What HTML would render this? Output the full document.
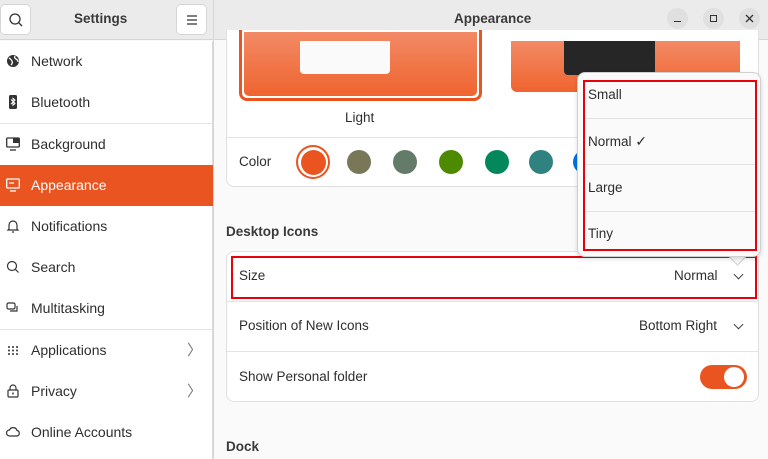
<!DOCTYPE html><html><head><style>
*{margin:0;padding:0;box-sizing:border-box}
body{width:768px;height:459px;overflow:hidden;font-family:"Liberation Sans",sans-serif;font-size:13.5px;color:#2e2e2e;background:#fafafa;position:relative}
.a{position:absolute}
.hdr{left:0;top:0;width:768px;height:40px;background:#ebebeb;border-bottom:1px solid #d6d6d6}
.side{left:0;top:41px;width:213px;height:418px;background:#fff;border-right:1px solid #d9d9d9}
.it{position:absolute;left:0;width:213px;height:41px;line-height:41px;padding-left:31px;font-size:14px}
.ic{position:absolute;left:6px;top:13px;width:14px;height:14px}
.btn{background:#fff;border:1px solid #d6d6d6;border-radius:5px}
.dot{width:24px;height:24px;border-radius:50%}
.card{background:#fff;border:1px solid #e0e0e0;border-radius:8px}
.sep{height:1px;background:#e3e3e3}
.chev{width:7px;height:7px;border-right:1.3px solid #444;border-bottom:1.3px solid #444;transform:rotate(45deg)}
</style></head><body>
<div class="a hdr"></div>
<div class="a btn" style="left:0;top:4px;width:31px;height:31px"><svg width="31" height="31"><circle cx="14" cy="14" r="5" fill="none" stroke="#333" stroke-width="1.3"/><line x1="18" y1="18" x2="21" y2="21" stroke="#333" stroke-width="1.3"/></svg></div>
<div class="a" style="left:74px;top:11px;font-weight:bold;font-size:13.5px;color:#3a3a3a">Settings</div>
<div class="a btn" style="left:176px;top:4px;width:31px;height:31px"><svg width="31" height="31"><path d="M10 11h10M10 15h10M10 19h10" stroke="#333" stroke-width="1.2"/></svg></div>
<div class="a" style="left:213px;top:0;width:1px;height:459px;background:#d6d6d6"></div>
<div class="a" style="left:454px;top:11px;font-weight:bold;font-size:13.5px;color:#3a3a3a">Appearance</div>
<div class="a" style="left:667px;top:8px;width:21px;height:21px;border-radius:50%;background:#e0e0e0"><div class="a" style="left:7px;top:13px;width:7px;height:1.3px;background:#333"></div></div>
<div class="a" style="left:703px;top:8px;width:21px;height:21px;border-radius:50%;background:#e0e0e0"><div class="a" style="left:7px;top:7px;width:7px;height:7px;border:1.2px solid #333"></div></div>
<div class="a" style="left:739px;top:8px;width:21px;height:21px;border-radius:50%;background:#e0e0e0"><svg width="21" height="21"><path d="M7 7l7 7M14 7l-7 7" stroke="#333" stroke-width="1.3"/></svg></div>

<div class="a side">
<div class="it" style="top:0">Network<svg class="ic" viewBox="0 0 14 14"><circle cx="7" cy="7" r="6" fill="#333"/><path d="M3 4q2 1 3 3t-1 4M9 2q-1 2 1 3t2 3" stroke="#fff" stroke-width="1.3" fill="none"/></svg></div>
<div class="it" style="top:41px">Bluetooth<svg class="ic" viewBox="0 0 14 14"><rect x="3" y="0" width="8" height="14" rx="1.5" fill="#333"/><path d="M5 4.5l4 4-2 1.8v-7l2 1.8-4 4" stroke="#fff" stroke-width="1" fill="none"/></svg></div>
<div class="a" style="left:0;top:82px;width:213px;height:1px;background:#e3e3e3"></div>
<div class="it" style="top:83px">Background<svg class="ic" viewBox="0 0 14 14"><rect x="0.7" y="1" width="12.6" height="9" rx="1" fill="none" stroke="#333" stroke-width="1.3"/><path d="M4 13h6" stroke="#333" stroke-width="1.3"/><rect x="7" y="1" width="6" height="5" fill="#333"/></svg></div>
<div class="it" style="top:124px;background:#e95420;color:#fff">Appearance<svg class="ic" viewBox="0 0 14 14"><rect x="0.7" y="1" width="12.6" height="9" rx="1" fill="none" stroke="#fff" stroke-width="1.3"/><path d="M4 13h6M3 5h5" stroke="#fff" stroke-width="1.3"/></svg></div>
<div class="it" style="top:165px">Notifications<svg class="ic" viewBox="0 0 14 14"><path d="M3 10V6a4 4 0 0 1 8 0v4l1 1H2zM6 13h2" stroke="#333" stroke-width="1.2" fill="none"/></svg></div>
<div class="it" style="top:206px">Search<svg class="ic" viewBox="0 0 14 14"><circle cx="6" cy="6" r="4.5" fill="none" stroke="#333" stroke-width="1.2"/><path d="M9.5 9.5l3 3" stroke="#333" stroke-width="1.2"/></svg></div>
<div class="it" style="top:247px">Multitasking<svg class="ic" viewBox="0 0 14 14"><rect x="1" y="2" width="8" height="6" rx="1.5" fill="none" stroke="#333" stroke-width="1.2"/><path d="M4 10h7V5" stroke="#333" stroke-width="1.2" fill="none"/></svg></div>
<div class="a" style="left:0;top:288px;width:213px;height:1px;background:#e3e3e3"></div>
<div class="it" style="top:289px">Applications<svg class="ic" viewBox="0 0 14 14" fill="#333"><circle cx="3" cy="4" r="1"/><circle cx="7" cy="4" r="1"/><circle cx="11" cy="4" r="1"/><circle cx="3" cy="7.5" r="1"/><circle cx="7" cy="7.5" r="1"/><circle cx="11" cy="7.5" r="1"/><circle cx="3" cy="11" r="1"/><circle cx="7" cy="11" r="1"/><circle cx="11" cy="11" r="1"/></svg><div class="a" style="left:187px;top:0;color:#777;font-size:15px">〉</div></div>
<div class="it" style="top:330px">Privacy<svg class="ic" viewBox="0 0 14 14"><rect x="2" y="6" width="10" height="7" rx="1" fill="none" stroke="#333" stroke-width="1.2"/><path d="M4 6V4a3 3 0 0 1 6 0v2" stroke="#333" stroke-width="1.2" fill="none"/><rect x="6.3" y="8.5" width="1.4" height="2" fill="#333"/></svg><div class="a" style="left:187px;top:0;color:#777;font-size:15px">〉</div></div>
<div class="it" style="top:371px">Online Accounts<svg class="ic" viewBox="0 0 14 14"><path d="M3.5 11a3 3 0 0 1 0-6 4 4 0 0 1 7.5 0.5 2.8 2.8 0 0 1 0 5.5z" stroke="#333" stroke-width="1.2" fill="none"/></svg></div>
</div>

<div class="a card" style="left:226px;top:30px;width:533px;height:157px;border-top:none;border-radius:0 0 8px 8px"></div>
<div class="a" style="left:239px;top:30px;width:243px;height:71px;border:3px solid #e95420;border-top:none;border-radius:0 0 8px 8px;background:#fff;padding:2px"><div style="width:100%;height:100%;border-radius:0 0 5px 5px;background:linear-gradient(#f28a65,#f0642f)"></div></div>
<div class="a" style="left:300px;top:41px;width:90px;height:33px;background:#fafafa;border-radius:0 0 4px 4px"></div>
<div class="a" style="left:511px;top:41px;width:229px;height:51px;border-radius:0 0 6px 6px;background:linear-gradient(#f28a65,#f0642f)"></div>
<div class="a" style="left:564px;top:41px;width:91px;height:34px;background:#262626;border-radius:0 0 4px 4px"></div>
<div class="a" style="left:345px;top:110px">Light</div>
<div class="a sep" style="left:227px;top:137px;width:531px"></div>
<div class="a" style="left:239px;top:154px">Color</div>
<div class="a" style="left:296px;top:145px;width:34px;height:34px;border-radius:50%;border:2.5px solid #e95420;padding:2.5px"><div style="width:100%;height:100%;border-radius:50%;background:#e95420"></div></div>
<div class="a dot" style="left:347px;top:150px;background:#787859"></div>
<div class="a dot" style="left:393px;top:150px;background:#657b69"></div>
<div class="a dot" style="left:439px;top:150px;background:#4e8a00"></div>
<div class="a dot" style="left:485px;top:150px;background:#03875b"></div>
<div class="a dot" style="left:529px;top:150px;background:#308280"></div>
<div class="a dot" style="left:573px;top:150px;background:#0073e5"></div>

<div class="a" style="left:226px;top:224px;font-weight:bold;color:#3a3a3a">Desktop Icons</div>
<div class="a card" style="left:226px;top:251px;width:533px;height:151px"></div>
<div class="a" style="left:231px;top:256px;width:526px;height:43px;border:2.5px solid #e8000b"></div>
<div class="a" style="left:239px;top:268px">Size</div>
<div class="a" style="left:674px;top:268px">Normal</div>
<div class="a chev" style="left:735px;top:271px"></div>
<div class="a sep" style="left:227px;top:301px;width:531px"></div>
<div class="a" style="left:239px;top:318px">Position of New Icons</div>
<div class="a" style="left:639px;top:318px">Bottom Right</div>
<div class="a chev" style="left:735px;top:321px"></div>
<div class="a sep" style="left:227px;top:351px;width:531px"></div>
<div class="a" style="left:239px;top:369px">Show Personal folder</div>
<div class="a" style="left:700px;top:365px;width:47px;height:24px;border-radius:12px;background:#e95420"><div class="a" style="left:24px;top:2px;width:20px;height:20px;border-radius:50%;background:#fff"></div></div>
<div class="a" style="left:226px;top:439px;font-weight:bold;color:#3a3a3a">Dock</div>

<div class="a" style="left:731px;top:250px;width:13px;height:13px;background:#fafafa;transform:rotate(45deg);border-right:1px solid #d0d0d0;border-bottom:1px solid #d0d0d0"></div>
<div class="a" style="left:577px;top:72px;width:184px;height:185px;background:#fafafa;border:1px solid #d0d0d0;border-radius:8px;box-shadow:0 2px 5px rgba(0,0,0,.15)"></div>
<div class="a sep" style="left:584px;top:118px;width:172px"></div>
<div class="a sep" style="left:584px;top:164px;width:172px"></div>
<div class="a sep" style="left:584px;top:211px;width:172px"></div>
<div class="a" style="left:583px;top:80px;width:174px;height:171px;border:2.5px solid #e8000b"></div>
<div class="a" style="left:588px;top:87px">Small</div>
<div class="a" style="left:588px;top:133px">Normal <span style="font-size:14px">✓</span></div>
<div class="a" style="left:588px;top:180px">Large</div>
<div class="a" style="left:588px;top:226px">Tiny</div>
</body></html>
